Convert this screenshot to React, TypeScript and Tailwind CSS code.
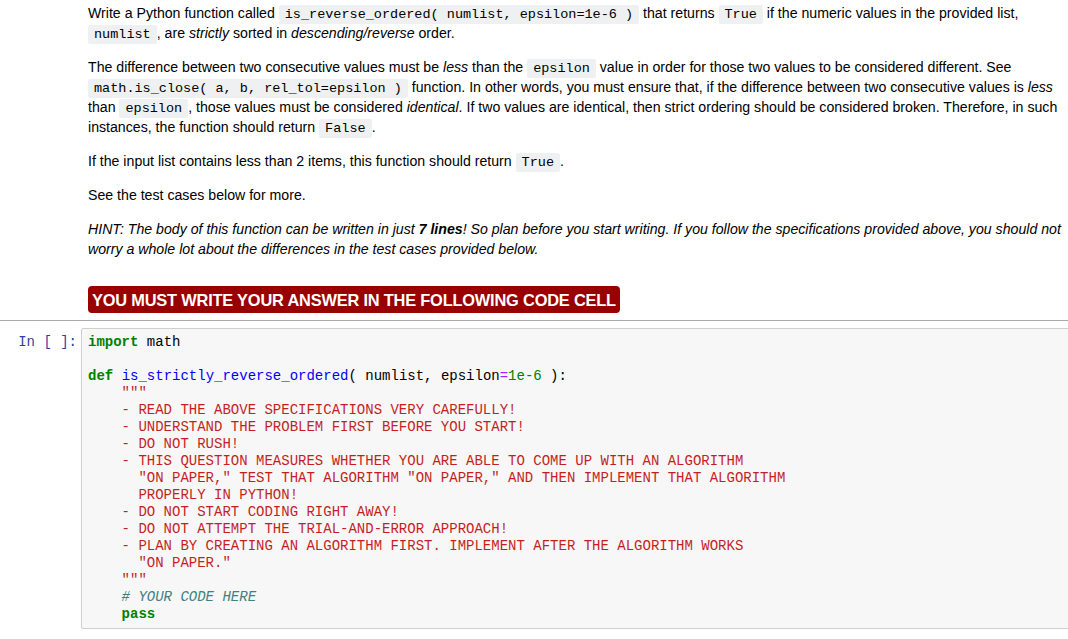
import React from "react";

const sans = { fontFamily: '"Liberation Sans", Arial, Helvetica, sans-serif' };

function Code({ children }: { children: React.ReactNode }) {
  return (
    <code className="bg-[#eff0f1] px-[6px] py-[2px] rounded-[2px] text-[13.5px] leading-none font-['Liberation_Mono',monospace] text-black">
      {children}
    </code>
  );
}

const doc = [
  "    - READ THE ABOVE SPECIFICATIONS VERY CAREFULLY!",
  "    - UNDERSTAND THE PROBLEM FIRST BEFORE YOU START!",
  "    - DO NOT RUSH!",
  "    - THIS QUESTION MEASURES WHETHER YOU ARE ABLE TO COME UP WITH AN ALGORITHM",
  '      "ON PAPER," TEST THAT ALGORITHM "ON PAPER," AND THEN IMPLEMENT THAT ALGORITHM',
  "      PROPERLY IN PYTHON!",
  "    - DO NOT START CODING RIGHT AWAY!",
  "    - DO NOT ATTEMPT THE TRIAL-AND-ERROR APPROACH!",
  "    - PLAN BY CREATING AN ALGORITHM FIRST. IMPLEMENT AFTER THE ALGORITHM WORKS",
  '      "ON PAPER."',
];

export default function App() {
  const str = "text-[#c41f1f]";
  const kw = "text-[#008000] font-bold";
  return (
    <div className="w-[1068px] h-[639px] overflow-hidden bg-white text-black">
      {/* markdown cell */}
      <div className="pl-[88px] pt-[3px] text-[14.15px] leading-[20px] whitespace-nowrap" style={sans}>
        <p className="mb-[14px]">
          Write a Python function called <Code>is_reverse_ordered( numlist, epsilon=1e-6 )</Code> that returns{" "}
          <Code>True</Code> if the numeric values in the provided list,
          <br />
          <Code>numlist</Code>, are <em>strictly</em> sorted in <em>descending/reverse</em> order.
        </p>
        <p className="mb-[14px]">
          The difference between two consecutive values must be <em>less</em> than the <Code>epsilon</Code> value in
          order for those two values to be considered different. See
          <br />
          <Code>math.is_close( a, b, rel_tol=epsilon )</Code> function. In other words, you must ensure that, if the
          difference between two consecutive values is <em>less</em>
          <br />
          than <Code>epsilon</Code>, those values must be considered <em>identical</em>. If two values are identical,
          then strict ordering should be considered broken. Therefore, in such
          <br />
          instances, the function should return <Code>False</Code>.
        </p>
        <p className="mb-[14px]">
          If the input list contains less than 2 items, this function should return <Code>True</Code>.
        </p>
        <p className="mb-[14px]">See the test cases below for more.</p>
        <p className="mb-[14px] italic">
          HINT: The body of this function can be written in just <strong>7 lines</strong>! So plan before you start
          writing. If you follow the specifications provided above, you should not
          <br />
          worry a whole lot about the differences in the test cases provided below.
        </p>
        <div className="mt-[13px] inline-flex items-center h-[27px] px-[4px] bg-[#990000] rounded-[4px] text-white font-bold text-[16.4px] tracking-[-0.2px]">
          YOU MUST WRITE YOUR ANSWER IN THE FOLLOWING CODE CELL
        </div>
      </div>

      <div className="mt-[7px] border-t border-[#ababab]" />

      {/* code cell */}
      <div className="mt-[7px] flex font-['Liberation_Mono',monospace] text-[14px] leading-[17px]">
        <div className="w-[81px] shrink-0 pt-[6px] pr-[4px] text-right text-[#303f9f] whitespace-pre">In [ ]:</div>
        <div className="w-[1100px] shrink-0 border border-[#cfcfcf] bg-[#f7f7f7] rounded-[2px] px-[6px] py-[5px] whitespace-pre">
          <div>
            <span className={kw}>import</span> math
          </div>
          <div>&nbsp;</div>
          <div>
            <span className={kw}>def</span> <span className="text-[#0000ff]">is_strictly_reverse_ordered</span>( numlist,
            epsilon<span className="text-[#aa22ff]">=</span>
            <span className="text-[#008000]">1e-6</span> ):
          </div>
          <div className={str}>{'    """'}</div>
          {doc.map((l, i) => (
            <div key={i} className={str}>
              {l}
            </div>
          ))}
          <div className={str}>{'    """'}</div>
          <div className="text-[#408080] italic">{"    # YOUR CODE HERE"}</div>
          <div>
            {"    "}
            <span className={kw}>pass</span>
          </div>
        </div>
      </div>
    </div>
  );
}
